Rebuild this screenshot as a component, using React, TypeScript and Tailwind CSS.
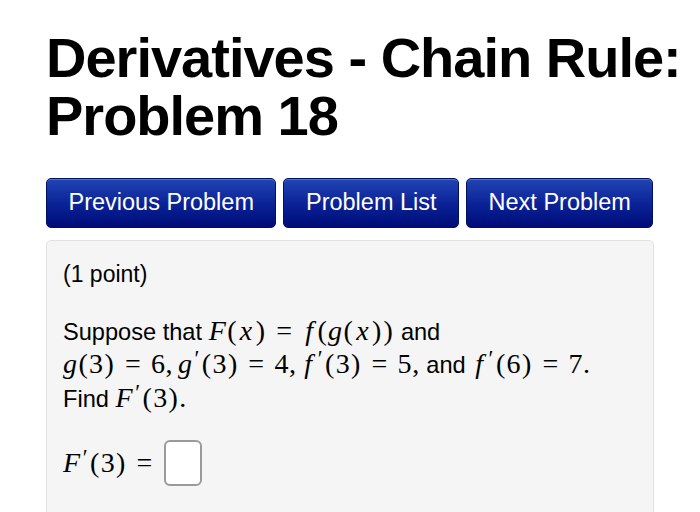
import React from 'react';

const serif = { fontFamily: '"Liberation Serif", "Times New Roman", serif' };

function V({ children, wide }: { children: React.ReactNode; wide?: 'f' | 'x' }) {
  const pad = wide === 'f' ? 'px-[3px]' : wide === 'x' ? 'px-[2px]' : '';
  return <i className={`italic ${pad}`}>{children}</i>;
}

function P() {
  return <span className="relative -top-[0.32em] text-[0.8em] not-italic pl-[2px] pr-[1px]">′</span>;
}

function Eq() {
  return <span className="inline-block w-[0.78em] mx-[0.25em] text-center">=</span>;
}

function L() {
  return <span className="px-[0.03em]">(</span>;
}

function R() {
  return <span className="px-[0.03em]">)</span>;
}

function M({ children }: { children: React.ReactNode }) {
  return (
    <span className="text-[28px] tracking-[0.02em]" style={serif}>
      {children}
    </span>
  );
}

const buttons = ['Previous Problem', 'Problem List', 'Next Problem'];

export default function App() {
  return (
    <div className="min-h-[512px] bg-white px-[46px] pt-[29px] font-['Liberation_Sans',Arial,sans-serif] text-black overflow-hidden">
      <h1 className="text-[56px] leading-[58px] font-bold tracking-[-1px] whitespace-nowrap">
        Derivatives - Chain Rule:
        <br />
        Problem 18
      </h1>

      <div className="mt-[33px] flex gap-[7px]">
        {buttons.map((b) => (
          <button
            key={b}
            className="shrink-0 whitespace-nowrap h-[50px] px-[21.5px] rounded-[5px] border border-[#00105a] bg-gradient-to-b from-[#2244b4] via-[#0c2398] to-[#000a78] text-white text-[23.5px] shadow-[inset_0_1px_0_rgba(255,255,255,0.25)]"
          >
            {b}
          </button>
        ))}
      </div>

      <div className="mt-[12px] w-[608px] h-[300px] rounded-[5px] border border-[#e2e2e2] bg-[#f5f5f5] pl-[16px] pt-[17px] text-[23px]">
        <p className="leading-[32px]">(1 point)</p>
        <div className="mt-[25px] leading-[32px] text-[23.6px]">
          <p>
            Suppose that{' '}
            <M>
              <V>F</V>
              <L />
              <V wide="x">x</V>
              <R />
              <Eq />
              <V wide="f">f</V>
              <L />
              <V>g</V>
              <L />
              <V wide="x">x</V>
              <R />
              <R />
            </M>{' '}
            and
          </p>
          <p>
            <M>
              <V>g</V>
              <L />3<R />
              <Eq />6,<span className="pl-[0.17em]" />
              <V>g</V>
              <P />
              <L />3<R />
              <Eq />4,<span className="pl-[0.17em]" />
              <V wide="f">f</V>
              <P />
              <L />3<R />
              <Eq />5,
            </M>{' '}
            and{' '}
            <M>
              <V wide="f">f</V>
              <P />
              <L />6<R />
              <Eq />7.
            </M>
          </p>
          <p>
            Find{' '}
            <M>
              <V>F</V>
              <P />
              <L />3<R />.
            </M>
          </p>
        </div>
        <div className="mt-[24px] flex items-center">
          <M>
            <V>F</V>
            <P />
            <L />3<R />
            <Eq />
          </M>
          <span className="ml-[1px] inline-block w-[38px] h-[46px] rounded-[6px] border-2 border-[#9a9a9a] bg-white" />
        </div>
      </div>
    </div>
  );
}
